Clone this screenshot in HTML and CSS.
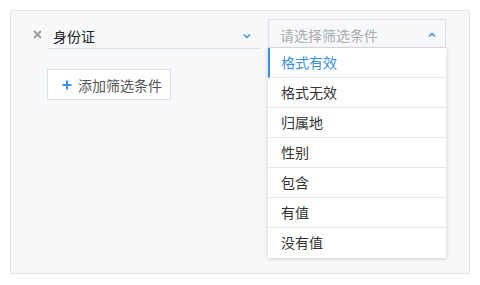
FILE: index.html
```html
<!DOCTYPE html>
<html lang="zh">
<head>
<meta charset="utf-8">
<link rel="stylesheet" href="styles.css">
</head>
<body>
<div class="panel">
  <div class="row">
    <span class="remove">
      <svg width="9" height="9" viewBox="0 0 9 9"><path d="M1 1L8 8M8 1L1 8" stroke="#9a9a9a" stroke-width="1.8" fill="none"/></svg>
    </span>
    <div class="field">
      <span class="field-text">身份证</span>
      <svg class="chev" width="8" height="6" viewBox="0 0 8 6"><path d="M1 1.5L4 4.5L7 1.5" stroke="#3a8ee6" stroke-width="1.5" fill="none"/></svg>
    </div>
    <div class="picker">
      <div class="picker-head">
        <span class="placeholder">请选择筛选条件</span>
        <svg class="chev" width="8" height="6" viewBox="0 0 8 6"><path d="M1 4.5L4 1.5L7 4.5" stroke="#3a8ee6" stroke-width="1.5" fill="none"/></svg>
      </div>
      <ul class="menu">
        <li class="item active">格式有效</li>
        <li class="item">格式无效</li>
        <li class="item">归属地</li>
        <li class="item">性别</li>
        <li class="item">包含</li>
        <li class="item">有值</li>
        <li class="item">没有值</li>
      </ul>
    </div>
  </div>
  <button class="add">
    <svg width="10" height="10" viewBox="0 0 10 10"><path d="M5 0.5V9.5M0.5 5H9.5" stroke="#3a8ee6" stroke-width="2" fill="none"/></svg>
    <span>添加筛选条件</span>
  </button>
</div>
</body>
</html>
```

FILE: styles.css
```css
html, body {
  margin: 0;
  padding: 0;
  background: #ffffff;
}
body {
  padding: 10px;
  font-family: "Noto Sans CJK SC", "Noto Sans", sans-serif;
  font-size: 14px;
  color: #333333;
}
.panel {
  box-sizing: border-box;
  width: 460px;
  height: 264px;
  border: 1px solid #e4e6ea;
  background: #f7f8fa;
  padding: 8px 0 0 22px;
}
.row {
  display: flex;
  align-items: flex-start;
}
.remove {
  width: 15px;
  height: 30px;
  display: flex;
  align-items: center;
  padding-top: 0;
  box-sizing: border-box;
}
.remove svg {
  margin-top: 1px;
}
.field {
  box-sizing: border-box;
  width: 212px;
  height: 30px;
  border-bottom: 1px solid #dcdfe6;
  display: flex;
  align-items: center;
  justify-content: space-between;
  padding: 4px 9px 0 5px;
}
.field-text {
  line-height: 20px;
  color: #222222;
}
.picker {
  position: relative;
  margin-left: 8px;
  width: 178px;
}
.picker-head {
  box-sizing: border-box;
  height: 29px;
  border: 1px solid #dcdee2;
  background: #f7f8fa;
  display: flex;
  align-items: center;
  justify-content: space-between;
  padding: 2px 9px 0 11px;
  box-shadow: 0 1px 2px rgba(0,0,0,0.06);
}
.placeholder {
  color: #a9abb0;
  line-height: 20px;
}
.menu {
  position: absolute;
  top: 29px;
  left: 0;
  width: 178px;
  margin: 0;
  padding: 0;
  list-style: none;
  background: #ffffff;
  box-shadow: 0 1px 4px rgba(0,0,0,0.18);
}
.item {
  box-sizing: border-box;
  height: 30px;
  line-height: 29px;
  padding-left: 13px;
  border-bottom: 1px solid #e6e6e6;
  color: #333333;
}
.item:last-child {
  border-bottom: none;
}
.item.active {
  color: #3a8ee6;
  border-left: 2px solid #3a8ee6;
  padding-left: 11px;
}
.add {
  box-sizing: border-box;
  margin: 20px 0 0 14px;
  width: 124px;
  height: 31px;
  border: 1px solid #dcdfe6;
  background: #ffffff;
  display: flex;
  align-items: center;
  gap: 6px;
  padding: 0 0 0 14px;
  font-family: inherit;
  font-size: 14px;
  color: #555555;
}
```
